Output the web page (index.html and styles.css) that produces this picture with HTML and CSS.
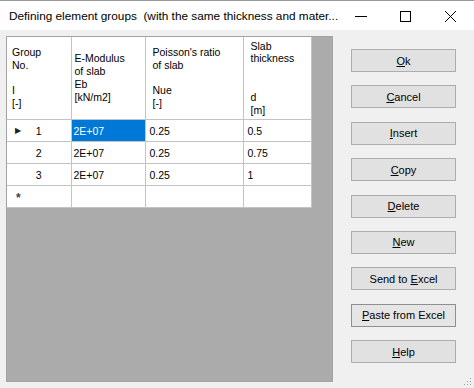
FILE: index.html
```html
<!DOCTYPE html>
<html lang="en">
<head>
    <meta charset="UTF-8">
    <title>Defining element groups</title>
    <link rel="stylesheet" href="styles.css">
</head>
<body>
    <div class="window">
        <div class="titlebar">
            <div class="title">Defining element groups&nbsp; (with the same thickness and mater...</div>
            <div class="controls">
                <svg class="ctl" width="46" height="30" viewBox="0 0 46 30"><path d="M17 15.5h12" stroke="#000" stroke-width="1"/></svg>
                <svg class="ctl" width="46" height="30" viewBox="0 0 46 30"><rect x="17.5" y="10.5" width="10" height="10" fill="none" stroke="#000" stroke-width="1"/></svg>
                <svg class="ctl" width="46" height="30" viewBox="0 0 46 30"><path d="M17 10l11 11M28 10l-11 11" stroke="#000" stroke-width="1"/></svg>
            </div>
        </div>

        <div class="content">
            <div class="grid-panel">
                <table class="grid">
                    <colgroup>
                        <col class="c0">
                        <col class="c1">
                        <col class="c2">
                        <col class="c3">
                    </colgroup>
                    <thead>
                        <tr>
                            <th class="rowhead">Group
No.

I
[-]</th>
                            <th class="first">E-Modulus
of slab
Eb
[kN/m2]</th>
                            <th>Poisson's ratio
of slab

Nue
[-]</th>
                            <th>Slab
thickness


d
[m]</th>
                        </tr>
                    </thead>
                    <tbody>
                        <tr>
                            <td class="rowhead"><span class="mark">&#9654;</span>1</td>
                            <td class="first selected">2E+07</td>
                            <td>0.25</td>
                            <td>0.5</td>
                        </tr>
                        <tr>
                            <td class="rowhead">2</td>
                            <td class="first">2E+07</td>
                            <td>0.25</td>
                            <td>0.75</td>
                        </tr>
                        <tr>
                            <td class="rowhead">3</td>
                            <td class="first">2E+07</td>
                            <td>0.25</td>
                            <td>1</td>
                        </tr>
                        <tr>
                            <td class="rowhead"><span class="mark star">*</span></td>
                            <td class="first"></td>
                            <td></td>
                            <td></td>
                        </tr>
                    </tbody>
                </table>
            </div>

            <div class="buttons">
                <button><u>O</u>k</button>
                <button><u>C</u>ancel</button>
                <button><u>I</u>nsert</button>
                <button><u>C</u>opy</button>
                <button><u>D</u>elete</button>
                <button><u>N</u>ew</button>
                <button>Send to <u>E</u>xcel</button>
                <button class="focused"><u>P</u>aste from Excel</button>
                <button><u>H</u>elp</button>
            </div>
        </div>

        <svg class="grip" width="10" height="10" viewBox="0 0 10 10">
            <rect x="8" y="2" width="1" height="1" fill="#a0a0a0"/>
            <rect x="8" y="5" width="1" height="1" fill="#a0a0a0"/>
            <rect x="5" y="5" width="1" height="1" fill="#a0a0a0"/>
            <rect x="8" y="8" width="1" height="1" fill="#a0a0a0"/>
            <rect x="5" y="8" width="1" height="1" fill="#a0a0a0"/>
            <rect x="2" y="8" width="1" height="1" fill="#a0a0a0"/>
        </svg>
    </div>
</body>
</html>
```

FILE: styles.css
```css
body {
    margin: 0;
    font-family: 'Liberation Sans', Arial, sans-serif;
    background: #f0f0f0;
}
.window {
    position: relative;
    width: 474px;
    height: 388px;
    background: #f0f0f0;
    overflow: hidden;
}
.titlebar {
    height: 30px;
    display: flex;
    align-items: center;
    justify-content: space-between;
    background: #fff;
    border-top: 1px solid #9a9a9a;
    box-sizing: border-box;
}
.title {
    padding-left: 9px;
    font-size: 11.8px;
    color: #000;
    white-space: nowrap;
}
.controls {
    display: flex;
}
.ctl {
    display: block;
    margin-left: -1px;
}
.content {
    display: flex;
    align-items: flex-start;
}
.grid-panel {
    margin: 6px 0 0 6px;
    width: 327px;
    height: 346px;
    box-sizing: border-box;
    background: #ababab;
    border: 1px solid #a3a3a3;
}
.grid {
    border-collapse: collapse;
    table-layout: fixed;
    width: 304px;
    background: #fff;
    font-size: 10.5px;
    color: #000;
}
.c0 { width: 64px; }
.c1 { width: 74px; }
.c2 { width: 98px; }
.c3 { width: 68px; }
.grid th,
.grid td {
    border: 1px solid #c4c4c4;
    text-align: left;
    vertical-align: middle;
    white-space: nowrap;
    overflow: hidden;
}
.grid tr:first-child th {
    border-top: none;
}
.grid th:first-child,
.grid td:first-child {
    border-left: none;
}
.grid th {
    height: 82px;
    padding: 0 0 0 7px;
    font-weight: normal;
    white-space: pre;
    line-height: 12.8px;
}
.grid th.rowhead {
    padding-left: 5px;
}
.grid th.first {
    padding-left: 3px;
}
.grid td {
    height: 21px;
    padding: 0 0 0 4px;
    line-height: 14px;
}
.grid td.first {
    padding-left: 2px;
}
.grid td.rowhead {
    position: relative;
    text-align: center;
    padding: 0;
}
.mark {
    position: absolute;
    left: 8px;
    top: 4px;
    font-size: 8px;
    color: #222;
}
.mark.star {
    left: 9px;
    top: 5px;
    font-size: 12px;
    font-weight: bold;
    color: #444;
}
.grid td.selected {
    background: #0078d7;
    color: #fff;
}
.buttons {
    display: flex;
    flex-direction: column;
    gap: 13.4px;
    margin: 19px 0 0 18px;
}
button {
    width: 105px;
    height: 23px;
    padding: 0;
    font-family: 'Liberation Sans', Arial, sans-serif;
    font-size: 11px;
    color: #000;
    background: #e1e1e1;
    border: 1px solid #adadad;
    box-sizing: border-box;
}
button.focused {
    background: #e5e5e5;
    border-color: #8f8f8f;
}
.grip {
    position: absolute;
    right: 2px;
    bottom: 2px;
}
```
